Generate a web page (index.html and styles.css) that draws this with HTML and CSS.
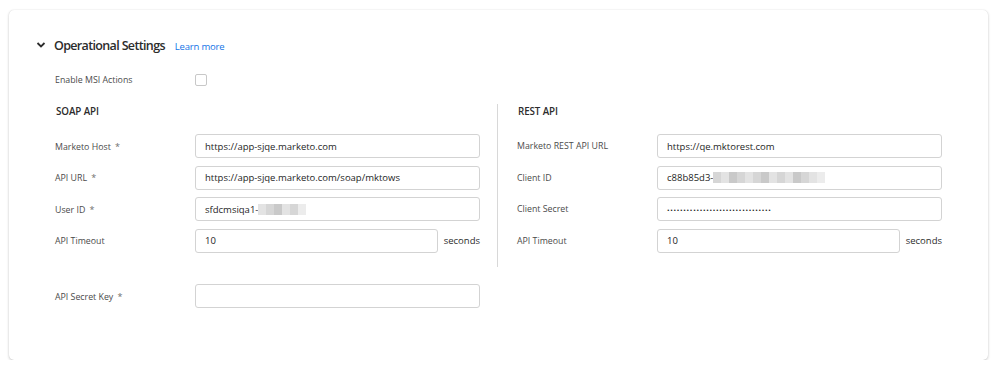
FILE: index.html
```html
<!DOCTYPE html>
<html lang="en">
<head>
    <meta charset="UTF-8">
    <title>Operational Settings</title>
    <link rel="stylesheet" href="styles.css">
</head>
<body>
    <div class="card">
        <div class="header">
            <svg class="chevron" width="10" height="8" viewBox="0 0 10 8">
                <path d="M1.5 2 L5 5.5 L8.5 2" fill="none" stroke="#2c2c2c" stroke-width="1.8"/>
            </svg>
            <h2>Operational Settings</h2>
            <a class="link" href="#">Learn more</a>
        </div>

        <div class="row msi">
            <span class="label">Enable MSI Actions</span>
            <span class="checkbox"></span>
        </div>

        <div class="columns">
            <div class="col">
                <h3>SOAP API</h3>
                <div class="row">
                    <span class="label">Marketo Host <i>*</i></span>
                    <div class="input">https://app-sjqe.marketo.com</div>
                </div>
                <div class="row">
                    <span class="label">API URL <i>*</i></span>
                    <div class="input">https://app-sjqe.marketo.com/soap/mktows</div>
                </div>
                <div class="row">
                    <span class="label">User ID <i>*</i></span>
                    <div class="input">sfdcmsiqa1-<span class="blur">
                        <b class="b1"></b><b class="b2"></b><b class="b3"></b><b class="b1"></b><b class="b2"></b><b class="b4"></b>
                    </span></div>
                </div>
                <div class="row">
                    <span class="label">API Timeout</span>
                    <div class="input short">10</div>
                    <span class="unit">seconds</span>
                </div>
            </div>

            <div class="divider"></div>

            <div class="col">
                <h3>REST API</h3>
                <div class="row">
                    <span class="label">Marketo REST API URL</span>
                    <div class="input">https://qe.mktorest.com</div>
                </div>
                <div class="row">
                    <span class="label">Client ID</span>
                    <div class="input">c88b85d3-<span class="blur">
                        <b class="b2"></b><b class="b1"></b><b class="b3"></b><b class="b2"></b><b class="b1"></b><b class="b2"></b><b class="b3"></b><b class="b1"></b><b class="b2"></b><b class="b1"></b><b class="b3"></b><b class="b2"></b><b class="b1"></b><b class="b4"></b>
                    </span></div>
                </div>
                <div class="row">
                    <span class="label">Client Secret</span>
                    <div class="input secret">................................</div>
                </div>
                <div class="row">
                    <span class="label">API Timeout</span>
                    <div class="input short">10</div>
                    <span class="unit">seconds</span>
                </div>
            </div>
        </div>

        <div class="row secret-key">
            <span class="label">API Secret Key <i>*</i></span>
            <div class="input"></div>
        </div>
    </div>
</body>
</html>
```

FILE: styles.css
```css
* {
    margin: 0;
    padding: 0;
    box-sizing: border-box;
}

body {
    background: #ffffff;
    font-family: 'Open Sans', 'Noto Sans', sans-serif;
    color: #2c2c2c;
}

.card {
    margin: 10px 0 0 9px;
    width: 979px;
    height: 350px;
    border-radius: 5px;
    background: #fff;
    box-shadow: 0 1px 3px rgba(0, 0, 0, 0.2), 0 0 1px rgba(0, 0, 0, 0.14);
    padding: 26px 0 0 27px;
}

.header {
    display: flex;
    align-items: center;
    height: 18px;
}

.chevron {
    margin-right: 8px;
}

h2 {
    font-size: 12.5px;
    font-weight: 600;
    color: #2c2c2c;
    margin-right: 10px;
    letter-spacing: -0.65px;
}

.link {
    font-size: 9.5px;
    color: #1473e6;
    text-decoration: none;
    margin-top: 2px;
    letter-spacing: -0.2px;
}

.row {
    display: flex;
    align-items: center;
    height: 24px;
    margin-bottom: 7.5px;
}

.label {
    width: 140px;
    flex-shrink: 0;
    font-size: 8.8px;
    color: #4b4b4b;
}

.label i {
    font-style: normal;
    margin-left: 2px;
    font-size: 9px;
    color: #6e6e6e;
}

.msi {
    margin: 20px 0 0 19px;
    height: 12px;
}

.checkbox {
    width: 12px;
    height: 12px;
    border: 1px solid #c8c8c8;
    border-radius: 2px;
    background: #fff;
}

.columns {
    display: flex;
    margin: 20px 0 0 19px;
}

.col {
    width: 425px;
}

h3 {
    font-size: 9.8px;
    font-weight: 600;
    color: #2c2c2c;
    margin: 0 0 16px 1px;
    line-height: 12px;
    letter-spacing: -0.1px;
}

.divider {
    width: 1px;
    background: #d8d8d8;
    margin: -2px 19px 0 17px;
    height: 163px;
}

.input {
    width: 285px;
    height: 24px;
    border: 1px solid #d3d3d3;
    border-radius: 3px;
    padding: 0 9px;
    font-size: 9.5px;
    color: #1e1e1e;
    display: flex;
    align-items: center;
    white-space: nowrap;
}

.input.short {
    width: 245px;
}

.input.secret {
    font-size: 9px;
    font-weight: 700;
    letter-spacing: 0.7px;
    padding-bottom: 3px;
    color: #222;
}

.unit {
    font-size: 9.5px;
    color: #2c2c2c;
    margin-left: 6px;
}

.blur {
    display: inline-flex;
    height: 11px;
}

.blur b {
    width: 8px;
    height: 11px;
}

.b1 {
    background: #e3e3e3;
}

.b2 {
    background: #d6d6d6;
}

.b3 {
    background: #c9c9c9;
}

.b4 {
    background: #ececec;
}

.secret-key {
    margin: 17px 0 0 19px;
}
```
